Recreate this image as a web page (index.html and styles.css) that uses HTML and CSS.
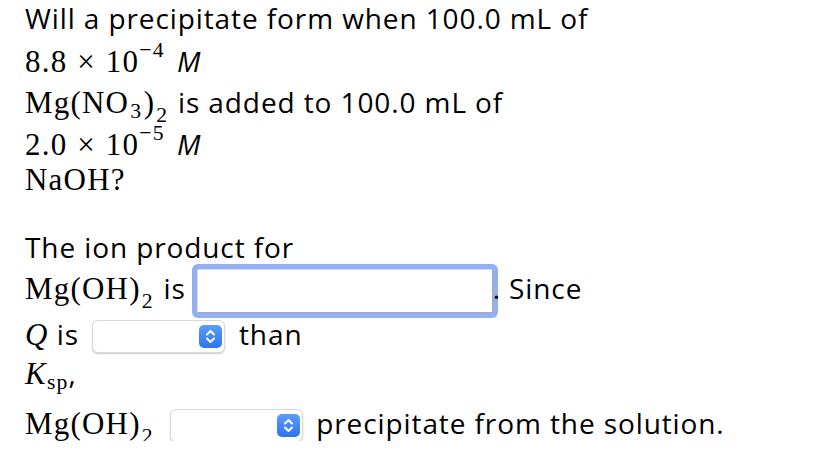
FILE: index.html
```html
<!DOCTYPE html>
<html lang="en">
<head>
<meta charset="utf-8">
<title>Precipitation question</title>
<link rel="stylesheet" href="styles.css">
</head>
<body>
<main class="problem">
  <div class="question">
    <p class="line">Will a precipitate form when 100.0 mL of</p>
    <p class="line"><span class="math">8.8<span class="bin">×</span>10<sup>−4</sup></span> <i class="unit">M</i></p>
    <p class="line"><span class="math">Mg(NO<sub>3</sub>)<sub class="low">2</sub></span> is added to 100.0 mL of</p>
    <p class="line"><span class="math">2.0<span class="bin">×</span>10<sup>−5</sup></span> <i class="unit">M</i></p>
    <p class="line"><span class="math">NaOH?</span></p>
  </div>
  <div class="answer">
    <p class="line">The ion product for</p>
    <p class="line"><span class="math">Mg(OH)<sub class="low">2</sub></span> is<input class="answer-input" type="text" aria-label="Ion product">. Since</p>
    <p class="line"><span class="math var">Q</span> is<span class="select" role="combobox" aria-label="Comparison"><span class="select-btn"><svg viewBox="0 0 23 23" width="23" height="23" aria-hidden="true"><path d="M8 9.5 L11.5 6 L15 9.5 M8 13.5 L11.5 17 L15 13.5" fill="none" stroke="#fff" stroke-width="2" stroke-linecap="round" stroke-linejoin="round"/></svg></span></span>than</p>
    <p class="line"><span class="math"><i>K</i><sub class="sp">sp</sub></span>,</p>
    <p class="line"><span class="math">Mg(OH)<sub class="low">2</sub></span><span class="select select-wide" role="combobox" aria-label="Outcome"><span class="select-btn"><svg viewBox="0 0 23 23" width="23" height="23" aria-hidden="true"><path d="M8 9.5 L11.5 6 L15 9.5 M8 13.5 L11.5 17 L15 13.5" fill="none" stroke="#fff" stroke-width="2" stroke-linecap="round" stroke-linejoin="round"/></svg></span></span>precipitate from the solution.</p>
  </div>
</main>
</body>
</html>
```

FILE: styles.css
```css
html, body {
  margin: 0;
  background: #fff;
}

body {
  font-family: "Open Sans", "Noto Sans", sans-serif;
  font-size: 28px;
  letter-spacing: 0.9px;
  color: #000;
}

.problem {
  padding-left: 25px;
}

.question {
  display: grid;
  grid-template-rows: 43px 41px 42px 35px 36px;
}

.answer {
  display: grid;
  grid-template-rows: 41px 46px 39px 50px 36px;
  margin-top: 32px;
}

.line {
  margin: 0;
  line-height: 36px;
  white-space: nowrap;
}

.math {
  font-family: "Liberation Serif", "Times New Roman", serif;
  font-size: 31px;
  line-height: 1;
  letter-spacing: 1.2px;
}

.math sup,
.math sub {
  font-size: 0.7em;
  line-height: 0;
}

.math sup {
  vertical-align: 0.68em;
}

.math sub {
  margin: 0 1.5px 0 1px;
  vertical-align: -0.23em;
}

.math sub.low {
  vertical-align: -0.4em;
}

.math sub.sp {
  margin: 0;
  vertical-align: -0.22em;
}

.var,
.math i {
  font-style: italic;
}

.bin {
  margin: 0 0.32em;
}

.unit {
  font-style: italic;
  margin-left: 4px;
}

.answer-input {
  box-sizing: border-box;
  width: 296px;
  height: 44px;
  margin: -1px 0 0 11px;
  padding: 0;
  vertical-align: top;
  border: 1px solid #a9a9a9;
  border-top-color: #d2dcf3;
  border-left-color: #d2dcf3;
  border-radius: 2px;
  background: #fff;
  box-shadow: 0 0 0 5px #93b0f3;
  font: inherit;
  outline: none;
}

.select {
  display: inline-flex;
  align-items: center;
  justify-content: flex-end;
  box-sizing: border-box;
  width: 133px;
  height: 33px;
  margin: 4px 14px 0 13px;
  padding-right: 2px;
  vertical-align: top;
  border: 1px solid #d9d9d9;
  border-radius: 6px;
  background: #fff;
  box-shadow: 0 1px 1.5px rgba(0, 0, 0, 0.22);
}

.select-wide {
  margin-left: 15px;
  margin-right: 13px;
}

.select-btn {
  display: flex;
  width: 23px;
  height: 23px;
  border-radius: 5px;
  background: linear-gradient(#5b9dfb, #2f73ee);
}
```
